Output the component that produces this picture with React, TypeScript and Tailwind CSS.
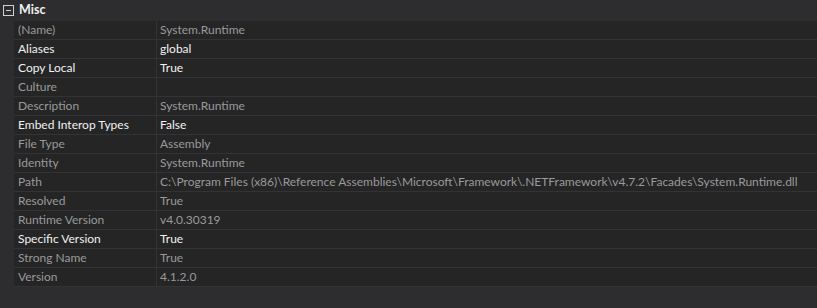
import React from "react";

type Prop = { name: string; value: string; editable?: boolean };

const rows: Prop[] = [
  { name: "(Name)", value: "System.Runtime" },
  { name: "Aliases", value: "global", editable: true },
  { name: "Copy Local", value: "True", editable: true },
  { name: "Culture", value: "" },
  { name: "Description", value: "System.Runtime" },
  { name: "Embed Interop Types", value: "False", editable: true },
  { name: "File Type", value: "Assembly" },
  { name: "Identity", value: "System.Runtime" },
  {
    name: "Path",
    value:
      "C:\\Program Files (x86)\\Reference Assemblies\\Microsoft\\Framework\\.NETFramework\\v4.7.2\\Facades\\System.Runtime.dll",
  },
  { name: "Resolved", value: "True" },
  { name: "Runtime Version", value: "v4.0.30319" },
  { name: "Specific Version", value: "True", editable: true },
  { name: "Strong Name", value: "True" },
  { name: "Version", value: "4.1.2.0" },
];

const CollapseIcon = () => (
  <svg width="11" height="11" viewBox="0 0 11 11" className="shrink-0">
    <rect x="0.5" y="0.5" width="10" height="10" fill="none" stroke="#d0d0d0" />
    <path d="M3 5.5h5" stroke="#d0d0d0" />
  </svg>
);

const PropertyRow = ({ name, value, editable }: Prop) => {
  const color = editable ? "text-[#f1f1f1]" : "text-[#9a9a9a]";
  return (
    <div className="flex h-[19px] border-b border-[#333337] bg-[#252526]">
      <div className={`flex w-[143px] shrink-0 items-center border-r border-[#333337] pl-[4px] ${color}`}>
        {name}
      </div>
      <div className={`flex flex-1 items-center overflow-hidden whitespace-nowrap pl-[3px] ${color}`}>
        {value}
      </div>
    </div>
  );
};

export default function App() {
  return (
    <div
      className="h-[308px] w-[817px] overflow-hidden bg-[#2d2d30] text-[12px] leading-none"
      style={{ fontFamily: 'Lato, "Noto Sans", sans-serif' }}
    >
      <div className="flex h-[21px] items-center gap-[5px] pl-[3px]">
        <CollapseIcon />
        <span className="text-[12.5px] font-bold text-[#f1f1f1]">Misc</span>
      </div>
      <div className="pl-[14px]">
        {rows.map((r) => (
          <PropertyRow key={r.name} {...r} />
        ))}
      </div>
    </div>
  );
}
